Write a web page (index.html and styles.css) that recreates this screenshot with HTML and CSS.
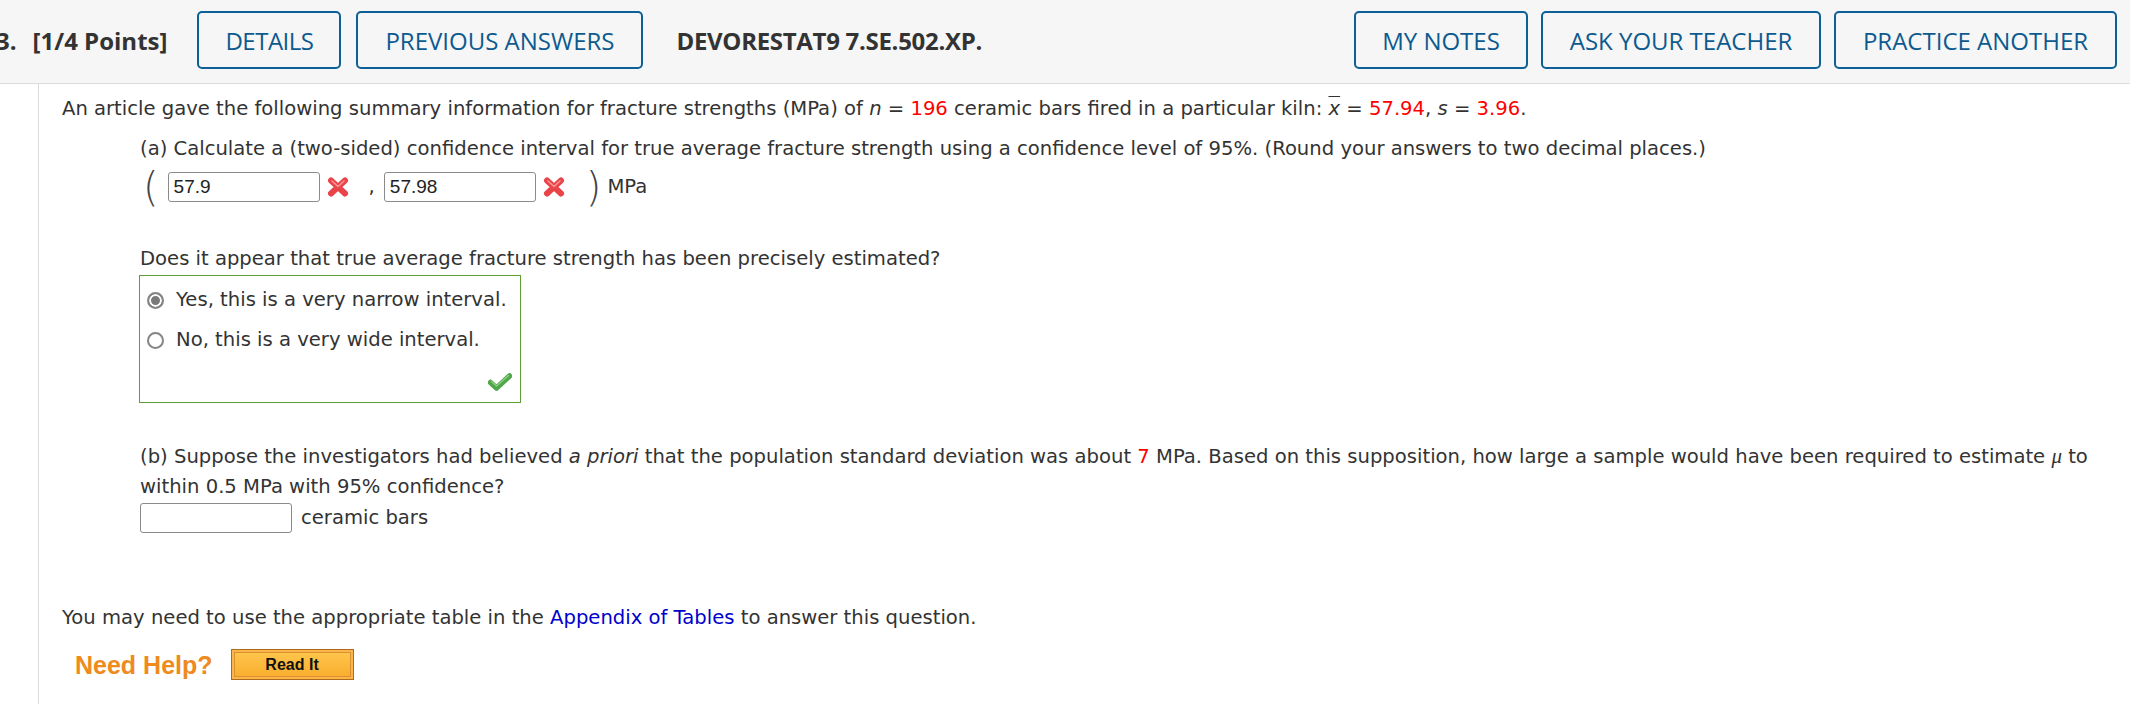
FILE: index.html
```html
<!DOCTYPE html>
<html lang="en">

<head>
    <meta charset="UTF-8">
    <meta name="viewport" content="width=device-width, initial-scale=1.0">
    <title>Question 3 - DEVORESTAT9 7.SE.502.XP.</title>
    <link rel="stylesheet" href="styles.css">
</head>

<body>

    <div class="question">
        <!-- header bar with the question number and tools -->
        <div class="q-header">
            <span class="q-num">3.</span>
            <span class="q-points">[1/4 Points]</span>
            <a class="q-btn btn-details" href="#">DETAILS</a>
            <a class="q-btn btn-previous" href="#">PREVIOUS ANSWERS</a>
            <span class="q-code">DEVORESTAT9 7.SE.502.XP.</span>
            <div class="q-tools">
                <a class="q-btn btn-notes" href="#">MY NOTES</a>
                <a class="q-btn btn-ask" href="#">ASK YOUR TEACHER</a>
                <a class="q-btn btn-practice" href="#">PRACTICE ANOTHER</a>
            </div>
        </div>

        <div class="q-body">
            <p class="lead">An article gave the following summary information for fracture strengths (MPa) of <i>n</i> = <span class="red">196</span> ceramic bars fired in a particular kiln: <i class="xbar">x</i> = <span class="red">57.94</span>, <i>s</i> = <span class="red">3.96</span>.</p>

            <div class="part">
                <p class="part-text">(a) Calculate a (two-sided) confidence interval for true average fracture strength using a confidence level of 95%. (Round your answers to two decimal places.)</p>
                <div class="interval">
                    <span class="paren">(</span>
                    <input class="answer" type="text" value="57.9">
                    <svg class="wrong" width="22" height="20" viewBox="0 0 22 20">
                        <path d="M4 3.5 L18 16.5 M18 3.5 L4 16.5" stroke="#e8444a" stroke-width="6" stroke-linecap="round" />
                        <path d="M5 4 L11 9.5 M17 4 L11 9.5" stroke="#ff9494" stroke-width="1.6" stroke-linecap="round" />
                    </svg>
                    <span class="comma">,</span>
                    <input class="answer" type="text" value="57.98">
                    <svg class="wrong" width="22" height="20" viewBox="0 0 22 20">
                        <path d="M4 3.5 L18 16.5 M18 3.5 L4 16.5" stroke="#e8444a" stroke-width="6" stroke-linecap="round" />
                        <path d="M5 4 L11 9.5 M17 4 L11 9.5" stroke="#ff9494" stroke-width="1.6" stroke-linecap="round" />
                    </svg>
                    <span class="paren close">)</span>
                    <span class="unit">MPa</span>
                </div>

                <p class="part-text ask">Does it appear that true average fracture strength has been precisely estimated?</p>
                <div class="choices">
                    <label class="choice"><span class="radio checked"></span>Yes, this is a very narrow interval.</label>
                    <label class="choice"><span class="radio"></span>No, this is a very wide interval.</label>
                    <div class="mark">
                        <svg width="24" height="18" viewBox="0 0 24 18">
                            <path d="M2.5 9.5 L8.5 15 L21.5 3" fill="none" stroke="#52a64c" stroke-width="5.5" stroke-linecap="round" stroke-linejoin="round" />
                            <path d="M3.5 8.5 L8.5 13 L20.5 2.5" fill="none" stroke="#92d28a" stroke-width="1.2" stroke-linecap="round" />
                        </svg>
                    </div>
                </div>

                <p class="part-text part-b">(b) Suppose the investigators had believed <i>a priori</i> that the population standard deviation was about <span class="red">7</span> MPa. Based on this supposition, how large a sample would have been required to estimate <i class="mu">&mu;</i> to within 0.5 MPa with 95% confidence?</p>
                <div class="count">
                    <input class="answer" type="text" value="">
                    <span class="unit">ceramic bars</span>
                </div>
            </div>

            <p class="note">You may need to use the appropriate table in the <a href="#">Appendix of Tables</a> to answer this question.</p>

            <div class="help">
                <span class="help-label">Need Help?</span>
                <button class="read-it">Read It</button>
            </div>
        </div>
    </div>

</body>

</html>
```

FILE: styles.css
```css
body {
    margin: 0;
    padding: 0;
    font-family: "DejaVu Sans", Verdana, sans-serif;
    color: #333;
    background-color: white;
    overflow: hidden;
}

.q-header {
    display: flex;
    align-items: center;
    background-color: #f6f6f6;
    border-bottom: 1px solid #dcdcdc;
    padding: 11px 13px 14px 0;
    font-family: "Open Sans", sans-serif;
    font-size: 24px;
}

.q-num {
    font-weight: bold;
    margin-left: -4px;
}

.q-points {
    font-weight: bold;
    margin-left: 16px;
    margin-right: 30px;
}

.q-code {
    font-weight: bold;
    margin-left: 33px;
    letter-spacing: -0.3px;
}

.q-btn {
    box-sizing: border-box;
    display: inline-flex;
    align-items: center;
    justify-content: center;
    height: 58px;
    border: 2px solid #0d5f98;
    border-radius: 5px;
    color: #0d5a8f;
    text-decoration: none;
    margin-right: 15px;
    white-space: nowrap;
}

.btn-details {
    width: 144px;
    letter-spacing: -0.5px;
}

.btn-previous {
    width: 287px;
    margin-right: 0;
}

.btn-notes {
    width: 174px;
}

.btn-ask {
    width: 280px;
}

.btn-practice {
    width: 283px;
}

.q-tools {
    display: flex;
    margin-left: auto;
}

.q-tools .q-btn {
    margin-right: 0;
    margin-left: 13px;
}

.q-body {
    margin-left: 38px;
    border-left: 1px solid #dcdcdc;
    padding: 10px 20px 40px 23px;
    font-size: 19.6px;
    line-height: 30px;
}

p {
    margin: 0;
}

.red {
    color: #f00;
}

.xbar {
    text-decoration: overline;
}

.mu {
    font-family: "Liberation Serif", serif;
    font-size: 21px;
    line-height: 20px;
}

.part {
    margin-left: 78px;
    margin-top: 10px;
}

.interval {
    display: flex;
    align-items: center;
    height: 42px;
    margin-top: 2px;
}

.paren {
    font-family: "DejaVu Sans", sans-serif;
    font-weight: 200;
    font-size: 40px;
    line-height: 42px;
    color: #444;
    margin-left: 3px;
    margin-right: 9px;
}

.paren.close {
    margin-left: 21px;
    margin-right: 6px;
}

.answer {
    box-sizing: border-box;
    width: 152px;
    height: 30px;
    border: 1px solid #8a8a8a;
    border-radius: 3px;
    padding: 0 5px;
    font-family: "Liberation Sans", Arial, sans-serif;
    font-size: 19px;
    color: #222;
}

.wrong {
    margin-left: 7px;
}

.comma {
    margin-left: 20px;
    margin-right: 9px;
}

.ask {
    margin-top: 36px;
}

.choices {
    box-sizing: border-box;
    width: 382px;
    margin-left: -1px;
    margin-top: 1px;
    border: 1px solid #5e9d36;
    padding: 4px 8px 12px 7px;
}

.choice {
    display: flex;
    align-items: center;
    height: 40px;
}

.radio {
    box-sizing: border-box;
    width: 17px;
    height: 17px;
    border: 2px solid #858585;
    border-radius: 50%;
    margin-right: 12px;
    flex-shrink: 0;
}

.radio.checked {
    background-color: #7a7a7a;
    box-shadow: inset 0 0 0 2px white;
}

.mark {
    display: flex;
    justify-content: flex-end;
    margin-top: 13px;
    height: 17px;
}

.part-b {
    margin-top: 39px;
}

.count {
    display: flex;
    align-items: center;
    gap: 9px;
    margin-top: 1px;
}

.note {
    margin-top: 70px;
}

.note a {
    color: #0000cc;
    text-decoration: none;
}

.help {
    display: flex;
    align-items: center;
    margin-top: 16px;
    margin-left: 13px;
}

.help-label {
    font-family: "Liberation Sans", Arial, sans-serif;
    font-weight: bold;
    font-size: 25px;
    color: #ee8a1e;
    margin-right: 18px;
}

.read-it {
    width: 123px;
    height: 31px;
    border: 1px solid #b06a1c;
    box-shadow: inset 0 0 0 2px #fbb548, inset 0 0 0 3px #d99030;
    background: linear-gradient(#ffc850, #f9ab2a);
    font-family: "Liberation Sans", Arial, sans-serif;
    font-weight: bold;
    font-size: 16px;
    color: #111;
    padding: 0;
}
```
